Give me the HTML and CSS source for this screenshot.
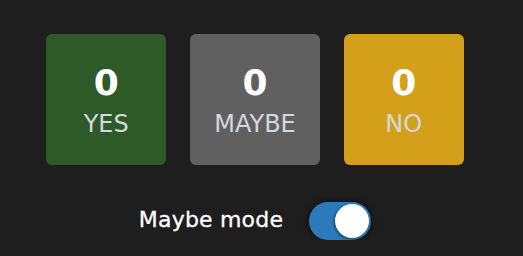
FILE: index.html
```html
<!DOCTYPE html>
<html>
<head>
<meta charset="utf-8">
<link rel="stylesheet" href="styles.css">
</head>
<body>
<div class="app">
  <div class="cards">
    <div class="card yes"><div class="count">0</div><div class="label">YES</div></div>
    <div class="card maybe"><div class="count">0</div><div class="label">MAYBE</div></div>
    <div class="card no"><div class="count">0</div><div class="label">NO</div></div>
  </div>
  <div class="mode">
    <span class="mode-text">Maybe mode</span>
    <span class="switch"><span class="knob"></span></span>
  </div>
</div>
</body>
</html>
```
FILE: styles.css
```css
html, body {
  margin: 0;
  padding: 0;
  background: #1e1e1e;
  font-family: "DejaVu Sans", sans-serif;
}
.app {
  width: 510px;
  padding-top: 34px;
  display: flex;
  flex-direction: column;
  align-items: center;
}
.cards {
  display: flex;
  gap: 24px;
}
.card {
  box-sizing: border-box;
  min-width: 120px;
  height: 131px;
  padding: 29px 24px 0;
  border-radius: 6px;
  display: flex;
  flex-direction: column;
  align-items: center;
}
.yes { background: #2e5a28; }
.maybe { background: #606060; }
.no { background: #d4a01a; }
.count {
  color: #ffffff;
  font-weight: bold;
  font-size: 36px;
  line-height: 40px;
}
.label {
  color: #d3d8de;
  font-size: 24px;
  line-height: 30px;
  margin-top: 6px;
}
.mode {
  margin-top: 37px;
  display: flex;
  align-items: center;
  gap: 26px;
}
.mode-text {
  color: #ffffff;
  font-size: 22px;
  line-height: 26px;
  margin-top: -2px;
  letter-spacing: 0.2px;
  -webkit-text-stroke: 0.3px #ffffff;
}
.switch {
  width: 62px;
  height: 38px;
  box-sizing: border-box;
  padding: 2px;
  border-radius: 19px;
  background: #2b7bbb;
  box-shadow: 0 0 8px rgba(0, 0, 0, 0.55);
  display: flex;
  justify-content: flex-end;
}
.knob {
  width: 34px;
  height: 34px;
  border-radius: 50%;
  background: #ffffff;
  box-shadow: -1px 1px 3px rgba(0, 0, 0, 0.5);
}
```
